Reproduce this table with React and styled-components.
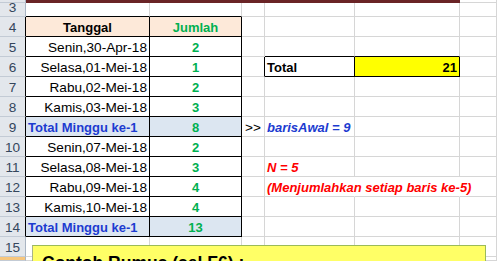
import React from 'react'
import styled, { createGlobalStyle } from 'styled-components'

const GRID = '#d6d6d6'
const BLACK = '#000000'
const GREEN = '#00b050'
const BLUE = '#1c3bd0'
const RED = '#ff0000'

const GlobalStyle = createGlobalStyle`
  html, body {
    margin: 0;
    padding: 0;
    background: #ffffff;
  }
  body {
    font-family: "Liberation Sans", Arial, sans-serif;
  }
`

const Sheet = styled.div`
  position: relative;
  display: grid;
  grid-template-columns: 26px 124px 92px 23px 90px 105px 1fr;
  grid-template-rows: 3px 14px repeat(12, 20px) 4px;
  width: 497px;
  height: 261px;
  overflow: hidden;
  background: #ffffff;
`

const RowHead = styled.div`
  box-sizing: border-box;
  display: flex;
  align-items: flex-end;
  justify-content: center;
  background: ${p => (p.$active ? '#f7c67d' : '#e3e7ec')};
  border-right: 1px solid ${p => p.$rb || '#a9b4c2'};
  border-bottom: 1px solid #c3cbd5;
  color: #34465c;
  font-size: 13.6px;
  line-height: 16px;
`

const Band = styled.div`
  grid-column: span 5;
  background: #6a2426;
`

const Cell = styled.div`
  box-sizing: border-box;
  display: flex;
  align-items: flex-end;
  justify-content: ${p => p.$align || 'flex-start'};
  padding: 0 2px;
  background: ${p => p.$fill || 'transparent'};
  border-right: 1px solid ${p => p.$rb || GRID};
  border-bottom: 1px solid ${p => p.$bb || GRID};
  color: ${p => p.$color || BLACK};
  font-size: ${p => (p.$bold ? '13px' : '13.6px')};
  font-weight: ${p => (p.$bold ? 700 : 400)};
  font-style: ${p => (p.$italic ? 'italic' : 'normal')};
  line-height: 16px;
  white-space: nowrap;
  overflow: visible;
  position: relative;
  z-index: ${p => (p.$spill ? 1 : 0)};
`

const Note = styled.div`
  position: absolute;
  left: 32px;
  top: 245px;
  width: 454px;
  height: 40px;
  box-sizing: border-box;
  padding: 7px 0 0 9px;
  background: #ffff66;
  border: 1px solid #9bbb59;
  border-left-color: #a8b48a;
  font-size: 17.5px;
  font-weight: 700;
  line-height: 20px;
  color: #000000;
  white-space: nowrap;
`

const head = { $fill: '#fde9d9', $bold: true, $align: 'center' }
const total = { $fill: '#dce6f1', $bold: true }
const tb = { $rb: BLACK, $bb: BLACK }

const dataRow = (n, date, count) => ({
  n,
  table: true,
  cells: [
    { text: date, ...tb, $align: 'flex-end' },
    { text: count, ...tb, $align: 'center', $bold: true, $color: GREEN },
    {}, {}, {}, {}
  ]
})

const totalRow = (n, count, extra = [{}, {}, {}, {}]) => ({
  n,
  table: true,
  cells: [
    { text: 'Total Minggu ke-1', ...tb, ...total, $color: BLUE },
    { text: count, ...tb, ...total, $align: 'center', $color: GREEN },
    ...extra
  ]
})

const rows = [
  { n: 3, cells: [{ $bb: BLACK }, { $bb: BLACK }, {}, {}, {}, {}] },
  {
    n: 4,
    table: true,
    cells: [
      { text: 'Tanggal', ...tb, ...head },
      { text: 'Jumlah', ...tb, ...head, $color: GREEN },
      {}, {}, {}, {}
    ]
  },
  (() => {
    const r = dataRow(5, 'Senin,30-Apr-18', '2')
    r.cells[3] = { $bb: BLACK }
    r.cells[4] = { $bb: BLACK }
    return r
  })(),
  (() => {
    const r = dataRow(6, 'Selasa,01-Mei-18', '1')
    r.cells[2] = { $rb: BLACK }
    r.cells[3] = { text: 'Total', $bold: true, $rb: BLACK, $bb: BLACK }
    r.cells[4] = { text: '21', $bold: true, $fill: '#ffff00', $align: 'flex-end', $rb: BLACK, $bb: BLACK }
    return r
  })(),
  dataRow(7, 'Rabu,02-Mei-18', '2'),
  dataRow(8, 'Kamis,03-Mei-18', '3'),
  totalRow(9, '8', [
    { text: '>>', $align: 'center' },
    { text: 'barisAwal = 9', $bold: true, $italic: true, $color: BLUE, $spill: true },
    {}, {}
  ]),
  dataRow(10, 'Senin,07-Mei-18', '2'),
  (() => {
    const r = dataRow(11, 'Selasa,08-Mei-18', '3')
    r.cells[3] = { text: 'N = 5', $bold: true, $italic: true, $color: RED }
    return r
  })(),
  (() => {
    const r = dataRow(12, 'Rabu,09-Mei-18', '4')
    r.cells[3] = { text: '(Menjumlahkan setiap baris ke-5)', $bold: true, $italic: true, $color: RED, $spill: true, $rb: 'transparent' }
    r.cells[4] = { $rb: 'transparent' }
    return r
  })(),
  dataRow(13, 'Kamis,10-Mei-18', '4'),
  totalRow(14, '13'),
  { n: 15, cells: [{}, {}, {}, {}, {}, {}] },
  { n: 16, active: true, cells: [{}, {}, {}, {}, {}, {}] }
]

export default function App() {
  return (
    <>
      <GlobalStyle />
      <Sheet>
        <RowHead />
        <Band />
        <Cell />

        {rows.map(row => (
          <React.Fragment key={row.n}>
            <RowHead $rb={row.table ? BLACK : undefined} $active={row.active}>
              {row.active ? '' : row.n}
            </RowHead>
            {row.cells.map(({ text, ...props }, i) => (
              <Cell key={i} {...props}>{text}</Cell>
            ))}
          </React.Fragment>
        ))}

        <Note>Contoh Rumus (sel F6) :</Note>
      </Sheet>
    </>
  )
}
